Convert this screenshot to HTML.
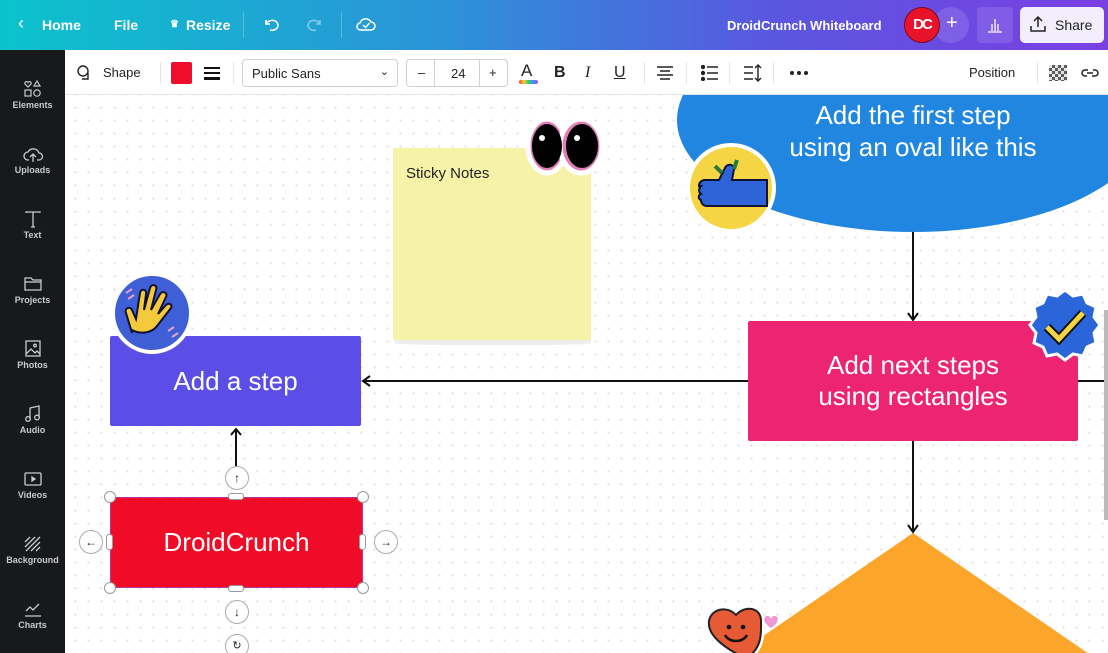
<!DOCTYPE html>
<html><head><meta charset="utf-8"><style>
*{margin:0;padding:0;box-sizing:border-box}
body{width:1108px;height:653px;overflow:hidden;font-family:"Liberation Sans",sans-serif;position:relative;background:#fff}
.top{position:absolute;left:0;top:0;width:1108px;height:50px;background:linear-gradient(90deg,#0bc3cc 0%,#2b93d8 40%,#5a56e0 70%,#7b3fe4 100%);color:#fff;font-weight:bold;font-size:14px}
.top span{position:absolute;top:17px}
.side{position:absolute;left:0;top:50px;width:65px;height:603px;background:#18191b;color:#c9cacc;font-size:9px;font-weight:bold;text-align:center}
.side div{position:absolute;left:0;width:65px}
.side svg{display:block;margin:0 auto 2px}
.tb{position:absolute;left:65px;top:50px;width:1043px;height:45px;background:#fff;border-bottom:1px solid #e4e5e7;font-size:13px;color:#222}
.tb .a{position:absolute;top:15px}
.canvas{position:absolute;left:65px;top:95px;width:1043px;height:558px;background-color:#fff;background-image:radial-gradient(circle,#dcdde0 0.9px,transparent 1.2px);background-size:13px 13px;background-position:4px 6px;overflow:hidden}
.box{position:absolute;color:#fff;font-size:26px;text-align:center;display:flex;align-items:center;justify-content:center;line-height:31px;border-radius:2px}
.h{position:absolute;width:12px;height:12px;border-radius:50%;background:#fff;border:1px solid #999}
.c{position:absolute;width:24px;height:24px;border-radius:50%;background:#fff;border:1px solid #aaa;font-size:12px;text-align:center;line-height:22px;color:#222}
</style></head><body>
<div class="top">
 <span style="left:18px;font-size:18px;top:13px;font-weight:normal">&#8249;</span>
 <span style="left:42px">Home</span>
 <span style="left:114px">File</span>
 <span style="left:170px;font-size:10px;top:19px">&#9819;</span>
 <span style="left:186px">Resize</span>
 <div style="position:absolute;left:243px;top:12px;width:1px;height:26px;background:rgba(255,255,255,.25)"></div>
 <svg style="position:absolute;left:262px;top:15px" width="20" height="20" viewBox="0 0 20 20" fill="none" stroke="#fff" stroke-width="1.6"><path d="M4 5 v4 h4"/><path d="M4 9 C7 4 15 4 16 10 C16 14 12 16 8 15"/></svg>
 <svg style="position:absolute;left:304px;top:15px;opacity:.45" width="20" height="20" viewBox="0 0 20 20" fill="none" stroke="#fff" stroke-width="1.6"><path d="M16 5 v4 h-4"/><path d="M16 9 C13 4 5 4 4 10 C4 14 8 16 12 15"/></svg>
 <div style="position:absolute;left:341px;top:12px;width:1px;height:26px;background:rgba(255,255,255,.25)"></div>
 <svg style="position:absolute;left:355px;top:14px" width="22" height="20" viewBox="0 0 22 20" fill="none" stroke="#fff" stroke-width="1.5"><path d="M6 16 h10 a4 4 0 0 0 0-8 a6 6 0 0 0-11 1 a3.5 3.5 0 0 0 1 7z"/><path d="M8 11 l2.5 2.5 l4-4.5"/></svg>
 <span style="left:727px;font-size:13px;top:18px">DroidCrunch Whiteboard</span>
 <div style="position:absolute;left:933px;top:7px;width:36px;height:36px;border-radius:50%;background:rgba(255,255,255,.12)"></div>
 <span style="left:946px;font-size:20px;top:12px;font-weight:normal">+</span>
 <div style="position:absolute;left:904px;top:7px;width:36px;height:36px;border-radius:50%;background:#e8132b;border:1px solid #7a0a16;text-align:center;line-height:34px;font-size:15px;letter-spacing:-2px">DC</div>
 <div style="position:absolute;left:977px;top:7px;width:36px;height:36px;border-radius:4px;background:rgba(255,255,255,.12)"></div>
 <svg style="position:absolute;left:985px;top:15px" width="20" height="18" viewBox="0 0 20 18" fill="none" stroke="#fff" stroke-width="1.3"><path d="M3 17h14M7 16V9M10 16V4M13 16V9"/></svg>
 <div style="position:absolute;left:1020px;top:7px;width:84px;height:36px;border-radius:5px;background:#f2eefc;color:#222;font-weight:normal"><svg style="position:absolute;left:9px;top:8px" width="18" height="18" viewBox="0 0 18 18" fill="none" stroke="#222" stroke-width="1.5"><path d="M9 2v10M5 6l4-4 4 4M2 11v5h14v-5"/></svg><span style="left:35px;top:10px;position:absolute;font-size:14px">Share</span></div>
</div>
<div class="side">
 <div style="top:30px"><svg width="20" height="18" viewBox="0 0 20 18" fill="none" stroke="#c9cacc" stroke-width="1.2"><path d="M5 7 L2 4 a1.6 1.6 0 0 1 3-1.5 a1.6 1.6 0 0 1 3 1.5z"/><path d="M14 1 l3 5 h-6z"/><rect x="2" y="10" width="6" height="6"/><circle cx="14" cy="13" r="3.2"/></svg>Elements</div>
 <div style="top:95px"><svg width="22" height="18" viewBox="0 0 22 18" fill="none" stroke="#c9cacc" stroke-width="1.3"><path d="M7 15 h-1 a4 4 0 0 1 0-8 a6 6 0 0 1 11 1 a3.5 3.5 0 0 1 0 7 h-2"/><path d="M11 17 v-8 M8 12 l3-3 3 3"/></svg>Uploads</div>
 <div style="top:160px"><svg width="20" height="18" viewBox="0 0 20 18" fill="none" stroke="#c9cacc" stroke-width="1.3"><path d="M3 3v-1h14v1M10 2v15M8 17h4"/></svg>Text</div>
 <div style="top:225px"><svg width="20" height="18" viewBox="0 0 20 18" fill="none" stroke="#c9cacc" stroke-width="1.3"><path d="M2 3h6l2 2h8v10H2z"/><path d="M2 7h16"/></svg>Projects</div>
 <div style="top:290px"><svg width="20" height="18" viewBox="0 0 20 18" fill="none" stroke="#c9cacc" stroke-width="1.3"><rect x="3" y="1" width="14" height="15"/><path d="M3 14l5-5 4 4 2-2 3 3"/><circle cx="12" cy="5.5" r="1.3"/></svg>Photos</div>
 <div style="top:355px"><svg width="20" height="18" viewBox="0 0 20 18" fill="none" stroke="#c9cacc" stroke-width="1.3"><path d="M7 14V3l9-2v11"/><circle cx="5" cy="14" r="2.3"/><circle cx="14" cy="12.5" r="2.3"/></svg>Audio</div>
 <div style="top:420px"><svg width="20" height="18" viewBox="0 0 20 18" fill="none" stroke="#c9cacc" stroke-width="1.3"><rect x="2" y="3" width="16" height="12" rx="1"/><path d="M9 7l3 2-3 2z" fill="#c9cacc"/></svg>Videos</div>
 <div style="top:485px"><svg width="20" height="18" viewBox="0 0 20 18" fill="none" stroke="#c9cacc" stroke-width="1.3"><path d="M2 7l5-5M2 12l10-10M3 16l14-14M8 16l9-9M13 16l4-4"/></svg>Background</div>
 <div style="top:550px"><svg width="20" height="18" viewBox="0 0 20 18" fill="none" stroke="#c9cacc" stroke-width="1.3"><path d="M3 11l4-4 3 3 6-6M2 16h16"/></svg>Charts</div>
</div>
<div class="tb">
 <svg style="position:absolute;left:11px;top:14px" width="18" height="18" viewBox="0 0 18 18" fill="none" stroke="#222" stroke-width="1.4"><circle cx="7" cy="7" r="5"/><path d="M12 9v6h-6"/></svg>
 <span class="a" style="left:38px">Shape</span>
 <div style="position:absolute;left:95px;top:12px;width:1px;height:22px;background:#e4e5e7"></div>
 <div style="position:absolute;left:106px;top:12px;width:21px;height:22px;background:#ee0d2a;border-radius:2px"></div>
 <div style="position:absolute;left:139px;top:17px;width:16px;height:2px;background:#111"></div>
 <div style="position:absolute;left:139px;top:22px;width:16px;height:2px;background:#111"></div>
 <div style="position:absolute;left:139px;top:27px;width:16px;height:3px;background:#111"></div>
 <div style="position:absolute;left:168px;top:12px;width:1px;height:22px;background:#e4e5e7"></div>
 <div style="position:absolute;left:177px;top:9px;width:156px;height:28px;border:1px solid #d0d1d4;border-radius:4px"><span style="position:absolute;left:9px;top:6px">Public Sans</span><span style="position:absolute;right:8px;top:5px;font-size:11px">&#8964;</span></div>
 <div style="position:absolute;left:341px;top:9px;width:102px;height:28px;border:1px solid #d0d1d4;border-radius:4px"><span style="position:absolute;left:11px;top:5px">&#8211;</span><div style="position:absolute;left:27px;top:0;width:1px;height:26px;background:#d0d1d4"></div><span style="position:absolute;left:44px;top:6px">24</span><div style="position:absolute;left:72px;top:0;width:1px;height:26px;background:#d0d1d4"></div><span style="position:absolute;left:82px;top:5px">+</span></div>
 <span style="position:absolute;left:456px;top:11px;font-size:17px">A</span>
 <div style="position:absolute;left:454px;top:30px;width:19px;height:4px;border-radius:2px;background:linear-gradient(90deg,#f33,#fc3,#3c6,#39f,#c3f)"></div>
 <span style="position:absolute;left:489px;top:14px;font-size:16px;font-weight:bold">B</span>
 <span style="position:absolute;left:520px;top:14px;font-size:16px;font-family:'Liberation Serif',serif;font-style:italic">I</span>
 <span style="position:absolute;left:549px;top:14px;font-size:16px;text-decoration:underline">U</span>
 <div style="position:absolute;left:579px;top:12px;width:1px;height:22px;background:#e4e5e7"></div>
 <svg style="position:absolute;left:591px;top:15px" width="18" height="16" viewBox="0 0 18 16" stroke="#222" stroke-width="1.4"><path d="M1 2h16M4 6h10M1 10h16M4 14h10"/></svg>
 <div style="position:absolute;left:621px;top:12px;width:1px;height:22px;background:#e4e5e7"></div>
 <svg style="position:absolute;left:636px;top:15px" width="18" height="16" viewBox="0 0 18 16" stroke="#222" stroke-width="1.4"><circle cx="2" cy="2" r="1.5" fill="#222"/><circle cx="2" cy="8" r="1.5" fill="#222"/><circle cx="2" cy="14" r="1.5" fill="#222"/><path d="M6 2h11M6 8h11M6 14h11"/></svg>
 <div style="position:absolute;left:664px;top:12px;width:1px;height:22px;background:#e4e5e7"></div>
 <svg style="position:absolute;left:678px;top:14px" width="20" height="18" viewBox="0 0 20 18" stroke="#222" stroke-width="1.4" fill="none"><path d="M1 3h9M1 9h9M1 15h9M15 1v16M12 4l3-3 3 3M12 14l3 3 3-3"/></svg>
 <div style="position:absolute;left:708px;top:12px;width:1px;height:22px;background:#e4e5e7"></div>
 <svg style="position:absolute;left:724px;top:20px" width="20" height="6"><circle cx="3" cy="3" r="2" fill="#222"/><circle cx="10" cy="3" r="2" fill="#222"/><circle cx="17" cy="3" r="2" fill="#222"/></svg>
 <span class="a" style="left:904px">Position</span>
 <div style="position:absolute;left:972px;top:12px;width:1px;height:22px;background:#e4e5e7"></div>
 <div style="position:absolute;left:984px;top:15px;width:18px;height:16px;background-image:repeating-conic-gradient(#333 0 25%,#ddd 0 50%);background-size:6px 6px;opacity:.8"></div>
 <svg style="position:absolute;left:1015px;top:14px" width="20" height="18" viewBox="0 0 20 18" fill="none" stroke="#222" stroke-width="1.5"><path d="M8 6h-3a3 3 0 0 0 0 6h2M12 12h3a3 3 0 0 0 0-6h-2M7 9h6"/></svg>
</div>
<div class="canvas">
 <svg style="position:absolute;left:0;top:0" width="1043" height="558">
  <ellipse cx="848" cy="25" rx="236" ry="112" fill="#2186e0"/>
  <polygon points="848,438 1043,572 653,572" fill="#fba52b"/>
  <g stroke="#111" stroke-width="2" fill="none">
   <path d="M848 137V224M843 218l5 7 5-7"/>
   <path d="M848 346V436M843 430l5 7 5-7"/>
   <path d="M683 286H298M305 281l-7 5 7 5"/>
   <path d="M1012 286H1043"/>
   <path d="M171 372V334M166 340l5-6 5 6"/>
  </g>
 </svg>
 <div style="position:absolute;left:1039px;top:215px;width:4px;height:210px;background:#bbb"></div>
 <div style="position:absolute;left:330px;top:244px;width:196px;height:6px;background:#eee;border-radius:0 0 30% 30%"></div>
 <div style="position:absolute;left:328px;top:53px;width:198px;height:192px;background:#f6f3a8;font-size:15px;color:#222;padding:17px 0 0 13px">Sticky Notes</div>
 <svg style="position:absolute;left:456px;top:14px" width="88" height="72" viewBox="0 0 88 72"><g stroke="#fff" stroke-width="5"><ellipse cx="26" cy="37" rx="19" ry="27" fill="#e07fb6"/><ellipse cx="60" cy="37" rx="21" ry="27" fill="#e07fb6"/></g><ellipse cx="26" cy="37" rx="15" ry="22" fill="#000"/><ellipse cx="61" cy="37" rx="16" ry="22" fill="#000"/><circle cx="21" cy="29" r="3" fill="#fff"/><circle cx="56" cy="29" r="3" fill="#fff"/></svg>
 <div class="box" style="left:683px;top:226px;width:330px;height:120px;background:#ec2472">Add next steps<br>using rectangles</div>
 <div style="position:absolute;left:683px;top:0;width:330px;height:80px;color:#fff;font-size:26px;line-height:32px;text-align:center;padding-top:4px">Add the first step<br>using an oval like this</div>
 <svg style="position:absolute;left:620px;top:47px" width="92" height="92" viewBox="0 0 92 92"><circle cx="46" cy="46" r="43" fill="#f6d544" stroke="#fff" stroke-width="4"/><path d="M14 44c0-4 3-6 6-6h14l6-12c2-5 9-4 9 1l-2 11h35v26H22c-4 0-6-3-6-6 -3-1-3-5 0-6-3-2-2-6 0-8z" fill="#2f64d8" stroke="#113" stroke-width="2"/><path d="M30 24l7 7M52 18l-3 9" stroke="#2a7a3c" stroke-width="4"/></svg>
 <svg style="position:absolute;left:960px;top:192px" width="80" height="80" viewBox="0 0 80 80"><path d="M40 3l8 6 10-2 4 9 9 4-2 10 6 8-6 8 2 10-9 4-4 9-10-2-8 6-8-6-10 2-4-9-9-4 2-10-6-8 6-8-2-10 9-4 4-9 10 2z" fill="#2a66d9" stroke="#fff" stroke-width="3"/><path d="M22 40l12 12 24-26" stroke="#111" stroke-width="9" fill="none"/><path d="M22 40l12 12 24-26" stroke="#f6d544" stroke-width="5" fill="none"/></svg>
 <div class="box" style="left:45px;top:241px;width:251px;height:90px;background:#5b4ee6">Add a step</div>
 <svg style="position:absolute;left:45px;top:176px" width="84" height="84" viewBox="0 0 84 84"><circle cx="42" cy="42" r="39" fill="#3f5fd6" stroke="#fff" stroke-width="4"/><path d="M22 62l-6-20c-2-5 4-7 6-3l4 9 4-26c1-5 7-4 6 1l-2 16 6-22c2-5 8-3 6 2l-5 20 9-16c3-4 8-1 6 3l-8 17 8-9c3-3 7 0 5 3l-14 18c-6 8-18 8-25 4z" fill="#f4c93c" stroke="#113" stroke-width="2"/><path d="M16 22l6-4M18 28l6-4M58 60l6-4M62 66l6-4" stroke="#e9a0d0" stroke-width="2"/></svg>
 <div class="box" style="left:45px;top:402px;width:253px;height:91px;background:#f00c26;border:1px solid #b23ca0;border-radius:0">DroidCrunch</div>
 <div class="h" style="left:39px;top:396px"></div><div class="h" style="left:292px;top:396px"></div>
 <div class="h" style="left:39px;top:487px"></div><div class="h" style="left:292px;top:487px"></div>
 <div style="position:absolute;left:163px;top:398px;width:16px;height:7px;background:#fff;border:1px solid #999;border-radius:3px"></div>
 <div style="position:absolute;left:163px;top:490px;width:16px;height:7px;background:#fff;border:1px solid #999;border-radius:3px"></div>
 <div style="position:absolute;left:41px;top:439px;width:7px;height:16px;background:#fff;border:1px solid #999;border-radius:3px"></div>
 <div style="position:absolute;left:294px;top:439px;width:7px;height:16px;background:#fff;border:1px solid #999;border-radius:3px"></div>
 <div class="c" style="left:160px;top:371px">&#8593;</div>
 <div class="c" style="left:160px;top:505px">&#8595;</div>
 <div class="c" style="left:14px;top:435px">&#8592;</div>
 <div class="c" style="left:309px;top:435px">&#8594;</div>
 <div class="c" style="left:160px;top:539px;font-size:11px">&#8635;</div>
 <svg style="position:absolute;left:640px;top:508px" width="86" height="60" viewBox="0 0 86 60"><path d="M41 56C18 44 2 32 4 18 6 6 22 2 31 12 40 2 56 4 56 18 56 30 58 44 41 56z" fill="#e65a35" stroke="#fff" stroke-width="7"/><path d="M41 56C18 44 2 32 4 18 6 6 22 2 31 12 40 2 56 4 56 18 56 30 58 44 41 56z" fill="#e65a35" stroke="#222" stroke-width="2"/><circle cx="24" cy="24" r="2.3" fill="#111"/><circle cx="38" cy="24" r="2.3" fill="#111"/><path d="M20 32c4 8 18 8 22 0" stroke="#111" stroke-width="2.5" fill="none"/><path d="M66 26c-6-4-9-8-7-12 2-3 6-2 7 0 1-2 5-3 7 0 2 4-1 8-7 12z" fill="#ee9ad2" stroke="#fff" stroke-width="1.5"/></svg>
</div>
</body></html>
